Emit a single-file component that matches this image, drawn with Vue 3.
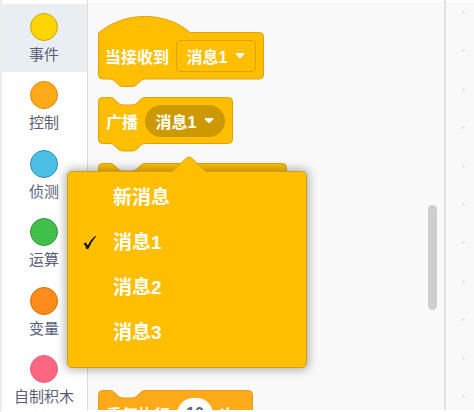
<script setup>
import { ref } from 'vue'

const categories = [
  { name: '事件', tone: 'events' },
  { name: '控制', tone: 'control' },
  { name: '侦测', tone: 'sensing' },
  { name: '运算', tone: 'operators' },
  { name: '变量', tone: 'variables' },
  { name: '自制积木', tone: 'custom' },
]
const active = ref('事件')
const messages = ['新消息', '消息1', '消息2', '消息3']
const selected = ref('消息1')
const loops = ref('10')

// Outline of a stackable block with a notch on top and a tab below.
function stackPath(w, h) {
  return `M.5 4.5Q.5 .5 4.5 .5H12Q15 .5 17 3L20 6Q22 8 25 8H34Q37 8 39 6L42 3Q44 .5 47 .5H${w - 4.5}Q${w - 0.5} .5 ${w - 0.5} 4.5V${h - 4.5}Q${w - 0.5} ${h - 0.5} ${w - 4.5} ${h - 0.5}H47Q44 ${h - 0.5} 42 ${h + 2}L39 ${h + 5}Q37 ${h + 7} 34 ${h + 7}H25Q22 ${h + 7} 20 ${h + 5}L17 ${h + 2}Q15 ${h - 0.5} 12 ${h - 0.5}H4.5Q.5 ${h - 0.5} .5 ${h - 4.5}Z`
}
</script>

<template>
  <div class="editor">
    <nav class="rail" aria-label="积木分类">
      <button
        v-for="c in categories"
        :key="c.name"
        type="button"
        class="category"
        :class="{ active: active === c.name }"
        @click="active = c.name"
      >
        <span class="dot" :class="c.tone"></span>
        <span>{{ c.name }}</span>
      </button>
    </nav>

    <main class="palette">
      <div class="block hat">
        <svg class="shape" width="166" height="71" viewBox="0 0 166 71" aria-hidden="true">
          <path d="M.5 17C26 -5 68 -5 92 16.500H161.500Q165.500 16.500 165.500 20.500V59Q165.500 63 161.500 63H47Q44 63 42 65.500L39 68.500Q37 70.500 34 70.500H25Q22 70.500 20 68.500L17 65.500Q15 63 12 63H4.500Q.5 63 .5 59Z" />
        </svg>
        <div class="row">
          <span>当接收到</span>
          <button type="button" class="field square">
            {{ selected }}
            <svg width="10" height="7" viewBox="0 0 10 7" aria-hidden="true"><path d="M1.500 1H8.500Q10 1 9 2.500L6 5.500Q5 6.500 4 5.500L1 2.500Q0 1 1.500 1Z" /></svg>
          </button>
        </div>
      </div>

      <div class="block">
        <svg class="shape" width="135" height="55" viewBox="0 0 135 55" aria-hidden="true">
          <path :d="stackPath(135, 47)" />
        </svg>
        <div class="row">
          <span>广播</span>
          <button type="button" class="field pill" aria-haspopup="listbox" aria-expanded="true">
            {{ selected }}
            <svg width="10" height="7" viewBox="0 0 10 7" aria-hidden="true"><path d="M1.500 1H8.500Q10 1 9 2.500L6 5.500Q5 6.500 4 5.500L1 2.500Q0 1 1.500 1Z" /></svg>
          </button>
        </div>
      </div>

      <div class="block">
        <svg class="shape" width="189" height="55" viewBox="0 0 189 55" aria-hidden="true">
          <path :d="stackPath(189, 47)" />
        </svg>
      </div>

      <div class="block loop">
        <svg class="shape" width="155" height="55" viewBox="0 0 155 55" aria-hidden="true">
          <path :d="stackPath(155, 47)" />
        </svg>
        <div class="row">
          <span>重复执行</span>
          <input v-model="loops" class="number" type="text" aria-label="次数" />
          <span>次</span>
        </div>
      </div>

      <div class="scrollbar"></div>
    </main>

    <aside class="workspace">
      <span v-for="n in 11" :key="n" class="grid-dot"></span>
    </aside>

    <div class="menu" role="listbox" aria-label="消息">
      <svg class="tip" width="34" height="17" viewBox="0 0 34 17" aria-hidden="true">
        <path class="fill" d="M0 17L1 15L14.500 2Q17 0 19.500 2L33 15L34 17Z" />
        <path class="edge" d="M1 15L14.500 2Q17 0 19.500 2L33 15" />
      </svg>
      <button
        v-for="m in messages"
        :key="m"
        type="button"
        role="option"
        class="option"
        :aria-selected="m === selected"
        @click="selected = m"
      >
        <span class="mark">
          <svg v-if="m === selected" width="14" height="15" viewBox="0 0 14 15" aria-hidden="true">
            <path d="M.5 8.500L2.800 7.500Q4 8.500 4.700 10.500Q7.500 4.500 12 1L13.200 1.200Q8.500 6.500 5.500 13.800L3.500 14.300Q2.500 10.500 .5 8.500Z" />
          </svg>
        </span>
        <span>{{ m }}</span>
      </button>
    </div>
  </div>
</template>

<style>
body {
  background: #fff;
}
</style>

<style scoped>
.editor {
  position: relative;
  box-sizing: border-box;
  display: flex;
  height: 100vh;
  overflow: hidden;
  border-left: 2px solid #ececee;
  border-bottom: 2px solid #fff;
  font-family: "Liberation Sans", "Noto Sans CJK SC", sans-serif;
}
button,
input {
  box-sizing: border-box;
  margin: 0;
  padding: 0;
  border: 0;
  background: none;
  font: inherit;
  color: inherit;
}
button {
  cursor: pointer;
}
.rail {
  box-sizing: border-box;
  flex: 0 0 86px;
  height: calc(100vh + 2px);
  padding-top: 4px;
  display: flex;
  flex-direction: column;
  justify-content: space-between;
  border-right: 1px solid #dcdcdf;
  background: #fff;
}
.category {
  flex: none;
  height: 68px;
  padding: 9px 1px 0 0;
  display: flex;
  flex-direction: column;
  align-items: center;
  gap: 4px;
  font-size: 15px;
  line-height: 20px;
  color: #575e75;
  white-space: nowrap;
}
.category.active {
  background: #e9eef2;
}
.dot {
  box-sizing: border-box;
  width: 28px;
  height: 28px;
  border: 1px solid;
  border-radius: 50%;
}
.events { background: #ffd500; border-color: #cca60c; }
.control { background: #ffab19; border-color: #cf8b17; }
.sensing { background: #4cbfe6; border-color: #2e8eb8; }
.operators { background: #40bf4a; border-color: #389438; }
.variables { background: #ff8c1a; border-color: #db6e00; }
.custom { background: #ff6680; border-color: #f0607a; }

.palette {
  position: relative;
  box-sizing: border-box;
  flex: 1;
  min-width: 0;
  padding: 16px 10px 0;
  display: flex;
  flex-direction: column;
  align-items: flex-start;
  gap: 11px;
  background: #f9f9f9;
  border-right: 2px solid #e2e2e2;
  box-shadow: inset 0 2px #fff;
}
.block {
  flex: none;
  display: grid;
  font-size: 16px;
  font-weight: 700;
  color: #fff;
}
.block > * {
  grid-area: 1 / 1;
}
.hat {
  margin-bottom: -1px;
}
.shape {
  display: block;
  fill: #ffbf00;
  stroke: #dca50f;
}
.row {
  display: flex;
  align-items: center;
  gap: 7px;
  height: 47px;
  padding: 0 8px;
  white-space: nowrap;
}
.hat .row {
  padding: 16px 8px 0 7px;
}
.field {
  width: 80px;
  height: 32px;
  display: flex;
  align-items: center;
  justify-content: center;
  gap: 8px;
}
.field svg {
  fill: #fff;
}
.square {
  border: 1px solid #dca50f;
  border-radius: 4px;
}
.pill {
  border-radius: 16px;
  background: #cc9900;
}
.loop {
  margin-top: 161px;
}
.loop .shape {
  fill: #ffab19;
  stroke: #e29a22;
}
.number {
  width: 36px;
  height: 32px;
  border-radius: 16px;
  background: #fff;
  text-align: center;
  color: #575e75;
}
.scrollbar {
  position: absolute;
  right: 7px;
  top: 50%;
  width: 9px;
  height: 105px;
  border-radius: 5px;
  background: #cecece;
}
.workspace {
  box-sizing: border-box;
  flex: 0 0 28px;
  padding: 11px 0 12px 16px;
  display: flex;
  flex-direction: column;
  justify-content: space-between;
  background: #f9f9f9;
  box-shadow: inset 0 2px #fff;
}
.grid-dot {
  width: 3px;
  height: 3px;
  border-radius: 50%;
  background: #e3e3e3;
}
.menu {
  position: absolute;
  left: 65px;
  top: 171px;
  box-sizing: border-box;
  width: 240px;
  padding: 3px 0 12px;
  border: 1px solid #cc9f1d;
  border-radius: 5px;
  background: #ffbf00;
  box-shadow: 0 0 10px 2px rgba(0, 0, 0, 0.3);
  color: #fff;
}
.tip {
  position: absolute;
  left: 104px;
  top: -16px;
}
.tip .fill {
  fill: #ffbf00;
}
.tip .edge {
  fill: none;
  stroke: #dca50f;
}
.option {
  display: flex;
  align-items: center;
  width: 100%;
  height: 45px;
  padding-left: 15px;
  font-size: 19px;
  font-weight: 700;
  line-height: 24px;
}
.mark {
  width: 30px;
  display: flex;
}
.mark svg {
  fill: #1f1805;
}
</style>
